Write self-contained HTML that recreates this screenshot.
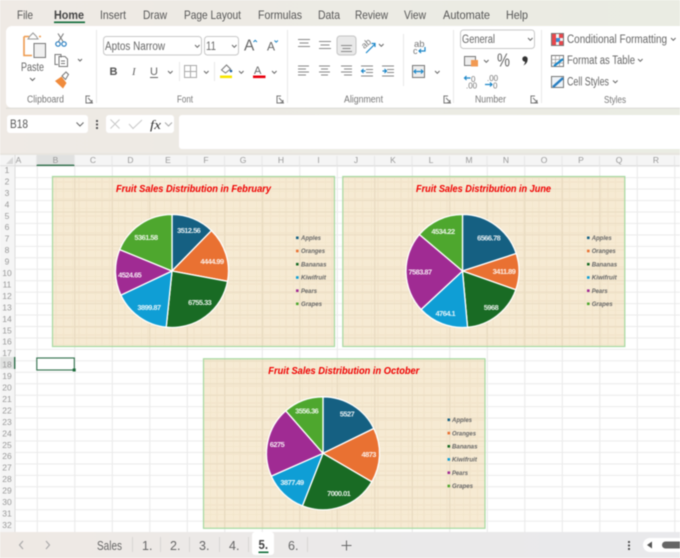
<!DOCTYPE html>
<html lang="en"><head><meta charset="utf-8"><title>Excel</title>
<style>
html,body{margin:0;padding:0;width:680px;height:558px;overflow:hidden;background:#fff}
svg{display:block;filter:blur(.4px)}
text{font-family:"Liberation Sans",sans-serif}
.m{font-size:12px;fill:#555}
.g{font-size:10px;fill:#777}
.r{font-size:11.5px;fill:#666}
.c{font-size:8.5px;fill:#999;text-anchor:middle}
.n{font-size:8.5px;fill:#999;text-anchor:middle}
.t{font-size:10.5px;font-weight:bold;font-style:italic;fill:#f00000}
.d{font-size:7.4px;font-weight:bold;fill:#fff;text-anchor:middle;opacity:.88;letter-spacing:-.5px}
.l{font-size:6.6px;font-weight:bold;font-style:italic;fill:#666}
.s{font-size:12.5px;fill:#666}
.ch{fill:none;stroke:#666;stroke-width:1}
.ln{stroke:#888;stroke-width:1}
.sp{stroke:#e8e8e8;stroke-width:1}
.ic{fill:none;stroke:#777;stroke-width:1}
.bl{fill:none;stroke:#1b86c8;stroke-width:1.2}
</style></head><body>
<svg width="680" height="558" viewBox="0 0 680 558" xmlns="http://www.w3.org/2000/svg">
<defs>
<linearGradient id="top" x1="0" x2="1"><stop offset="0" stop-color="#efeae5"/><stop offset=".55" stop-color="#ecebe4"/><stop offset="1" stop-color="#eaece3"/></linearGradient>
<linearGradient id="bot" x1="0" x2="1"><stop offset="0" stop-color="#efe9e4"/><stop offset=".45" stop-color="#ebe9e9"/><stop offset="1" stop-color="#e9e9ec"/></linearGradient>
<pattern id="vg" x="36.8" y="0" width="37.5" height="10" patternUnits="userSpaceOnUse"><rect width="1" height="10" fill="#e9e9e9"/></pattern>
<pattern id="hg" x="0" y="165.7" width="10" height="11.45" patternUnits="userSpaceOnUse"><rect width="10" height="1" fill="#ebebeb"/></pattern>
<pattern id="vc" x="36.8" y="0" width="37.5" height="10" patternUnits="userSpaceOnUse"><rect width="1" height="10" fill="#e6d8bd"/></pattern>
<pattern id="hc" x="0" y="165.7" width="10" height="11.45" patternUnits="userSpaceOnUse"><rect width="10" height="1" fill="#eadcc2"/></pattern>
<pattern id="tx" width="23" height="17" patternUnits="userSpaceOnUse">
<rect width="23" height="17" fill="#f6ead3"/>
<rect x="3" width="1" height="17" fill="#f0e2c8" opacity=".6"/><rect x="9" width="2" height="17" fill="#f3e5cb" opacity=".7"/><rect x="17" width="1" height="17" fill="#f0e1c6" opacity=".6"/>
<rect y="4" width="23" height="1" fill="#f0e2c8" opacity=".6"/><rect y="11" width="23" height="2" fill="#f3e5cb" opacity=".7"/>
</pattern>
</defs>

<rect width="680" height="155" fill="url(#top)"/>

<!-- menu -->
<text class="m" x="17" y="19" textLength="16" lengthAdjust="spacingAndGlyphs">File</text>
<text class="m" x="54" y="19" textLength="30" lengthAdjust="spacingAndGlyphs" font-weight="bold" style="fill:#444">Home</text>
<rect x="54" y="21.5" width="31" height="1.6" fill="#0f6b38"/>
<text class="m" x="100" y="19" textLength="26" lengthAdjust="spacingAndGlyphs">Insert</text>
<text class="m" x="143" y="19" textLength="24" lengthAdjust="spacingAndGlyphs">Draw</text>
<text class="m" x="184" y="19" textLength="57" lengthAdjust="spacingAndGlyphs">Page Layout</text>
<text class="m" x="258" y="19" textLength="44" lengthAdjust="spacingAndGlyphs">Formulas</text>
<text class="m" x="318" y="19" textLength="22" lengthAdjust="spacingAndGlyphs">Data</text>
<text class="m" x="355" y="19" textLength="33" lengthAdjust="spacingAndGlyphs">Review</text>
<text class="m" x="404" y="19" textLength="22" lengthAdjust="spacingAndGlyphs">View</text>
<text class="m" x="443" y="19" textLength="47" lengthAdjust="spacingAndGlyphs">Automate</text>
<text class="m" x="506" y="19" textLength="22" lengthAdjust="spacingAndGlyphs">Help</text>

<!-- ribbon -->
<rect x="6" y="26" width="690" height="82" rx="6" fill="#fff"/>
<rect x="6" y="107.5" width="680" height="1.5" fill="#dcdad6" opacity=".7"/>
<g class="sp"><line x1="96.5" y1="30" x2="96.5" y2="103"/><line x1="287.5" y1="30" x2="287.5" y2="103"/><line x1="453.5" y1="30" x2="453.5" y2="103"/><line x1="541.5" y1="30" x2="541.5" y2="103"/><line x1="403.5" y1="34" x2="403.5" y2="86"/><line x1="179.5" y1="62" x2="179.5" y2="81"/><line x1="214.5" y1="62" x2="214.5" y2="81"/></g>

<!-- clipboard -->
<path d="M24 36.5h5M39 36.5h2M24 36.5v19h8" fill="none" stroke="#ee9a4d" stroke-width="1.6"/>
<path d="M28 39l2-3 3-3 3 3 2 3z" fill="#fff" stroke="#999"/>
<rect x="34" y="43.5" width="11.5" height="14" fill="#f0f0f0" stroke="#777"/>
<text class="r" x="21" y="71" textLength="23" lengthAdjust="spacingAndGlyphs">Paste</text>
<path class="ch" d="M30 78l2.500 2.500 2.500-2.500"/>
<path d="M58 33.500l5 8M63.500 33.500l-5 8" fill="none" stroke="#777" stroke-width="1"/>
<circle cx="58" cy="44" r="2.200" fill="none" stroke="#2a7fc1" stroke-width="1.200"/><circle cx="64" cy="44" r="2.200" fill="none" stroke="#2a7fc1" stroke-width="1.200"/>
<path class="ic" d="M58 64.500h-3v-10h6l0 3"/><path class="ic" d="M59 56.500h6l2.500 2.500v7.500h-8.500zM61 61h4M61 63.500h4"/>
<path class="ch" d="M78 59l2 2 2-2"/>
<path d="M55 81l6.500-4.500 5 6.500-3.500 5.500z" fill="#f08b3c"/><path d="M62 76l4-4 2.500 2.500-3 5z" fill="none" stroke="#777"/>
<text class="g" x="27" y="102.500" textLength="37" lengthAdjust="spacingAndGlyphs">Clipboard</text>
<path class="ic" d="M93 103h-7v-7h4M88 98l4 4M92 100v2.500h-2.500" stroke-width=".9"/>

<!-- font -->
<rect x="103.500" y="36.500" width="98" height="18.500" rx="3" fill="#fff" stroke="#c8c8c8"/>
<text class="r" x="105" y="50" textLength="60" lengthAdjust="spacingAndGlyphs">Aptos Narrow</text>
<path class="ch" d="M195 45l2.300 2.300 2.300-2.300"/>
<rect x="204.500" y="36.500" width="34" height="18.500" rx="3" fill="#fff" stroke="#c8c8c8"/>
<text class="r" x="206" y="50" textLength="10" lengthAdjust="spacingAndGlyphs">11</text>
<path class="ch" d="M232 45l2.300 2.300 2.300-2.300"/>
<text x="244" y="50.500" font-size="15.500" fill="#666">A</text><path d="M253.500 42l1.700-1.700 1.700 1.700" fill="none" stroke="#1b86c8"/>
<text x="267" y="50.500" font-size="12" fill="#666">A</text><path d="M274.500 40.500l1.700 1.700 1.700-1.700" fill="none" stroke="#1b86c8"/>
<text x="109.500" y="75" font-size="11" font-weight="bold" fill="#555">B</text>
<text x="132" y="75" font-size="11" font-style="italic" fill="#666" style="font-family:'Liberation Serif',serif">I</text>
<text x="150" y="75" font-size="11" fill="#666">U</text><line x1="150" y1="77.500" x2="158" y2="77.500" stroke="#666"/>
<path class="ch" d="M168 71l2.300 2.300 2.300-2.300"/>
<rect x="184.500" y="65.500" width="12" height="12" fill="none" stroke="#aaa"/><path d="M190.500 65.500v12M184.500 71.500h12" stroke="#aaa"/>
<path class="ch" d="M204 71l2.300 2.300 2.300-2.300"/>
<path d="M221.500 70l5-5 4 4-5 4z" fill="none" stroke="#777"/><circle cx="231" cy="71" r="1.300" fill="#1c5f9e"/>
<rect x="220" y="75.500" width="12" height="2.600" fill="#f7e500"/>
<path class="ch" d="M239 71l2.300 2.300 2.300-2.300"/>
<text x="254" y="74" font-size="11" fill="#666">A</text><rect x="253" y="75.500" width="12.500" height="2.600" fill="#e8000d"/>
<path class="ch" d="M272 71l2.300 2.300 2.300-2.300"/>
<text class="g" x="177" y="102.500" textLength="16" lengthAdjust="spacingAndGlyphs">Font</text>
<path class="ic" d="M284 103h-7v-7h4M279 98l4 4M283 100v2.500h-2.500" stroke-width=".9"/>

<!-- alignment -->
<rect x="337" y="36" width="19" height="19" rx="3" fill="#e9e9e9" stroke="#c4c4c4"/>
<g class="ln">
<path d="M298 39.500h12M299.500 43h9M298 46.500h12"/>
<path d="M319 41.500h12M320.500 45h9M319 48.500h12"/>
<path d="M341 45.500h11M342.500 48.500h8M341 51.500h11"/>
<path d="M298 66h11M298 69h8M298 72h11M298 75h8"/>
<path d="M319 66h11M321 69h7M319 72h11M321 75h7"/>
<path d="M341 66h11M344 69h8M341 72h11M344 75h8"/>
<path d="M361 66h12M366 69.500h7M366 72.500h7M361 76h12"/>
<path d="M382 66h12M387 69.500h7M387 72.500h7M382 76h12"/>
</g>
<path class="bl" d="M361.500 71h4M363.500 69l-2 2 2 2M382.500 71h4M384.500 69l2 2-2 2"/>
<text x="362" y="47" font-size="9" fill="#777" transform="rotate(-40 366 45)">ab</text>
<path class="bl" d="M366 53l9-9M371.500 43.500h3.500v3.500"/>
<path class="ch" d="M379 44l2.300 2.300 2.300-2.300"/>
<text x="414" y="47" font-size="9.500" fill="#777">ab</text><text x="413" y="54" font-size="9" fill="#777">c</text>
<path class="bl" d="M425 47v4h-6M421 49l-2 2 2 2"/>
<rect x="412.500" y="65.500" width="12" height="12" fill="#eee" stroke="#777"/><path class="bl" d="M414 71.500h9M416 69.500l-2 2 2 2M421 69.500l2 2-2 2"/>
<path class="ch" d="M435 71l2.300 2.300 2.300-2.300"/>
<text class="g" x="344" y="102.500" textLength="39" lengthAdjust="spacingAndGlyphs">Alignment</text>
<path class="ic" d="M451 103h-7v-7h4M446 98l4 4M450 100v2.500h-2.500" stroke-width=".9"/>

<!-- number -->
<rect x="460.500" y="30" width="74" height="18.500" rx="3" fill="#fff" stroke="#c8c8c8"/>
<text class="r" x="462" y="43" textLength="33" lengthAdjust="spacingAndGlyphs">General</text>
<path class="ch" d="M528 38l2.300 2.300 2.300-2.300"/>
<rect x="464.500" y="56.500" width="11" height="9" fill="#eee" stroke="#777"/><rect x="471" y="60" width="7" height="6.500" fill="#f29a53"/>
<path class="ch" d="M484 60l2.300 2.300 2.300-2.300"/>
<text x="497" y="66.500" font-size="18" fill="#666" textLength="13" lengthAdjust="spacingAndGlyphs">%</text>
<circle cx="525" cy="59" r="2.700" fill="#333"/><path d="M527.600 59.500q0 4-4.300 6q2.200-2.500 1.700-4.500z" fill="#333"/>
<text x="471" y="82" font-size="8" fill="#777">0</text><text x="466" y="88.500" font-size="8" fill="#777">.00</text>
<path class="bl" d="M464.500 78h6M466.500 76l-2 2 2 2"/>
<text x="487" y="81" font-size="8" fill="#777">.00</text><text x="493" y="88.500" font-size="8" fill="#777">0</text>
<path class="bl" d="M485 84.500h7M490 82.500l2 2-2 2"/>
<text class="g" x="475" y="102.500" textLength="31" lengthAdjust="spacingAndGlyphs">Number</text>
<path class="ic" d="M538 103h-7v-7h4M533 98l4 4M537 100v2.500h-2.500" stroke-width=".9"/>

<!-- styles -->
<rect x="551.500" y="33.500" width="12" height="12" fill="#f3f3f3" stroke="#777"/><rect x="552" y="34" width="4" height="11" fill="#e8474c"/><rect x="559" y="34" width="4" height="4" fill="#e8474c"/><rect x="556" y="38" width="4" height="4" fill="#3b8fd6"/><rect x="559" y="41" width="4" height="4" fill="#e8474c"/>
<text class="r" x="567" y="43" textLength="100" lengthAdjust="spacingAndGlyphs">Conditional Formatting</text>
<path class="ch" d="M671 38l2.300 2.300 2.300-2.300"/>
<rect x="551.500" y="55.500" width="12" height="11" fill="#fff" stroke="#777"/><path d="M555.500 55.500v11M559.500 55.500v11M551.500 59.500h12M551.500 63h12" stroke="#999" stroke-width=".7"/><path d="M554 66l9-7" stroke="#1b86c8" stroke-width="2.200"/>
<text class="r" x="567" y="64" textLength="68" lengthAdjust="spacingAndGlyphs">Format as Table</text>
<path class="ch" d="M638 59l2.300 2.300 2.300-2.300"/>
<rect x="551.500" y="76.500" width="12" height="11" fill="#eef3f8" stroke="#777"/><path d="M553 87l10-9" stroke="#2a7fc1" stroke-width="2.500"/>
<text class="r" x="567" y="85.500" textLength="42" lengthAdjust="spacingAndGlyphs">Cell Styles</text>
<path class="ch" d="M613 80.500l2.300 2.300 2.300-2.300"/>
<text class="g" x="604" y="103" textLength="22" lengthAdjust="spacingAndGlyphs">Styles</text>

<!-- formula bar -->
<rect x="7" y="115" width="81" height="18" rx="3" fill="#fff"/>
<text class="r" x="10" y="128" textLength="18" lengthAdjust="spacingAndGlyphs" style="fill:#555">B18</text>
<path class="ch" d="M76.500 122.500l3.500 3.500 3.500-3.500"/>
<g fill="#555"><rect x="96" y="120" width="2" height="2"/><rect x="96" y="123.500" width="2" height="2"/><rect x="96" y="127" width="2" height="2"/></g>
<rect x="106" y="115" width="68" height="18" rx="3" fill="#fff"/>
<path d="M110.500 119.500l9 9M119.500 119.500l-9 9M129 124l4 4.500 9-8.500" fill="none" stroke="#c8c8c8"/>
<text x="150" y="129" font-size="13" font-style="italic" fill="#333" style="font-family:'Liberation Serif',serif" textLength="11" lengthAdjust="spacingAndGlyphs">fx</text>
<path d="M165 122.500l3.500 3.500 3.500-3.500" fill="none" stroke="#aaa"/>
<rect x="179" y="115" width="520" height="34" rx="3" fill="#fff"/>

<!-- sheet -->
<rect x="0" y="153" width="680" height="2" fill="#e8e5df"/>
<rect x="0" y="155" width="680" height="377" fill="#fff"/>
<rect x="15" y="166" width="665" height="366" fill="url(#vg)"/>
<rect x="15" y="166" width="665" height="366" fill="url(#hg)"/>
<rect x="0" y="155" width="680" height="11" fill="#f5f5f5"/>
<rect x="0" y="166" width="15" height="366" fill="#f5f5f5"/>
<rect x="0" y="165.200" width="680" height="1" fill="#dcdcdc"/>
<rect x="14.500" y="155" width="1" height="377" fill="#dcdcdc"/>
<path d="M13 157v7h-7z" fill="#d8d8d8"/>
<rect x="36.500" y="155" width="38" height="11" fill="#e0e1e0"/>
<rect x="36.500" y="164.600" width="38" height="1.400" fill="#2f6f4b"/>
<rect x="0" y="357" width="15" height="12" fill="#e0e1e0"/>
<rect x="14" y="357" width="1.400" height="12" fill="#2f6f4b"/>
<g stroke="#e8e8e8"><path d="M36.500 156v9M74.500 156v9M112 156v9M149.500 156v9M187 156v9M224.500 156v9M262 156v9M299.500 156v9M337 156v9M374.500 156v9M412 156v9M449.500 156v9M487 156v9M524.500 156v9M562 156v9M599.500 156v9M637 156v9M674.500 156v9"/></g>
<g class="c">
<text x="18.500" y="163">A</text><text x="55.500" y="163">B</text><text x="93" y="163">C</text><text x="130.500" y="163">D</text><text x="168" y="163">E</text><text x="206" y="163">F</text><text x="243" y="163">G</text><text x="281" y="163">H</text><text x="318.500" y="163">I</text><text x="356" y="163">J</text><text x="393" y="163">K</text><text x="431" y="163">L</text><text x="469" y="163">M</text><text x="506" y="163">N</text><text x="544" y="163">O</text><text x="581" y="163">P</text><text x="619" y="163">Q</text><text x="656" y="163">R</text>
</g>
<g class="n">
<text x="7" y="173">1</text><text x="7" y="184.500">2</text><text x="7" y="196">3</text><text x="7" y="207.300">4</text><text x="7" y="218.800">5</text><text x="7" y="230.200">6</text><text x="7" y="241.700">7</text><text x="7" y="253.100">8</text><text x="7" y="264.600">9</text><text x="7" y="276">10</text><text x="7" y="287.500">11</text><text x="7" y="298.900">12</text><text x="7" y="310.400">13</text><text x="7" y="321.800">14</text><text x="7" y="333.300">15</text><text x="7" y="344.700">16</text><text x="7" y="356.200">17</text><text x="7" y="367.600">18</text><text x="7" y="379.100">19</text><text x="7" y="390.500">20</text><text x="7" y="402">21</text><text x="7" y="413.400">22</text><text x="7" y="424.900">23</text><text x="7" y="436.300">24</text><text x="7" y="447.800">25</text><text x="7" y="459.200">26</text><text x="7" y="470.700">27</text><text x="7" y="482.100">28</text><text x="7" y="493.600">29</text><text x="7" y="505">30</text><text x="7" y="516.500">31</text><text x="7" y="528">32</text>
</g>

<!-- selected cell -->
<rect x="36.800" y="358" width="37.500" height="12" fill="#fff" stroke="#2f6f4b" stroke-width="1.100"/>
<rect x="72.700" y="368.500" width="3" height="3" fill="#1b6b3a"/>

<!-- chart 1 -->
<rect x="52.500" y="176.500" width="282" height="170" fill="url(#tx)"/>
<rect x="52.500" y="176.500" width="282" height="170" fill="url(#vc)"/>
<rect x="52.500" y="176.500" width="282" height="170" fill="url(#hc)"/>
<rect x="52.500" y="176.500" width="282" height="170" fill="none" stroke="#a6d9a0" stroke-width="1.200"/>
<text class="t" x="116" y="192" textLength="155" lengthAdjust="spacingAndGlyphs">Fruit Sales Distribution in February</text>
<g transform="translate(172 271)" stroke="#fff" stroke-width="1.300" stroke-linejoin="round">
<path fill="#156082" d="M0 0V-56.500A56.500 56.500 0 0 1 39.500 -40.400Z"/>
<path fill="#e97132" d="M0 0L39.500 -40.400A56.500 56.500 0 0 1 55.550 10.300Z"/>
<path fill="#196b24" d="M0 0L55.550 10.300A56.500 56.500 0 0 1 -5.760 56.200Z"/>
<path fill="#0f9ed5" d="M0 0L-5.760 56.200A56.500 56.500 0 0 1 -51.100 24.100Z"/>
<path fill="#a02b93" d="M0 0L-51.100 24.100A56.500 56.500 0 0 1 -52.300 -21.400Z"/>
<path fill="#4ea72e" d="M0 0L-52.300 -21.400A56.500 56.500 0 0 1 0 -56.500Z"/>
</g>
<g class="d"><text x="188.700" y="232.800">3512.56</text><text x="212" y="263.800">4444.99</text><text x="199.700" y="304.800">6755.33</text><text x="149" y="309.800">3899.87</text><text x="129.700" y="277.300">4524.65</text><text x="146" y="239.800">5361.58</text></g>
<g><rect x="296" y="236.500" width="2.600" height="2.600" fill="#156082"/><rect x="296" y="249.700" width="2.600" height="2.600" fill="#e97132"/><rect x="296" y="262.900" width="2.600" height="2.600" fill="#196b24"/><rect x="296" y="276.200" width="2.600" height="2.600" fill="#0f9ed5"/><rect x="296" y="289.400" width="2.600" height="2.600" fill="#a02b93"/><rect x="296" y="302.500" width="2.600" height="2.600" fill="#4ea72e"/></g>
<g class="l"><text x="301" y="240" textLength="20" lengthAdjust="spacingAndGlyphs">Apples</text><text x="301" y="253.200" textLength="24" lengthAdjust="spacingAndGlyphs">Oranges</text><text x="301" y="266.400" textLength="25.500" lengthAdjust="spacingAndGlyphs">Bananas</text><text x="301" y="279.700" textLength="25" lengthAdjust="spacingAndGlyphs">Kiwifruit</text><text x="301" y="292.900" textLength="16" lengthAdjust="spacingAndGlyphs">Pears</text><text x="301" y="306" textLength="21" lengthAdjust="spacingAndGlyphs">Grapes</text></g>

<!-- chart 2 -->
<rect x="342.800" y="176.500" width="282" height="170" fill="url(#tx)"/>
<rect x="342.800" y="176.500" width="282" height="170" fill="url(#vc)"/>
<rect x="342.800" y="176.500" width="282" height="170" fill="url(#hc)"/>
<rect x="342.800" y="176.500" width="282" height="170" fill="none" stroke="#a6d9a0" stroke-width="1.200"/>
<text class="t" x="416" y="192" textLength="135" lengthAdjust="spacingAndGlyphs">Fruit Sales Distribution in June</text>
<g transform="translate(462.500 271)" stroke="#fff" stroke-width="1.300" stroke-linejoin="round">
<path fill="#156082" d="M0 0V-56.500A56.500 56.500 0 0 1 53.700 -17.450Z"/>
<path fill="#e97132" d="M0 0L53.700 -17.450A56.500 56.500 0 0 1 53.300 18.800Z"/>
<path fill="#196b24" d="M0 0L53.300 18.800A56.500 56.500 0 0 1 5.050 56.300Z"/>
<path fill="#0f9ed5" d="M0 0L5.050 56.300A56.500 56.500 0 0 1 -41.400 38.500Z"/>
<path fill="#a02b93" d="M0 0L-41.400 38.500A56.500 56.500 0 0 1 -43.100 -36.500Z"/>
<path fill="#4ea72e" d="M0 0L-43.100 -36.500A56.500 56.500 0 0 1 0 -56.500Z"/>
</g>
<g class="d"><text x="488.700" y="240.500">6566.78</text><text x="504" y="273.800">3411.89</text><text x="491" y="309.800">5968</text><text x="445.300" y="315.800">4764.1</text><text x="420" y="274.500">7583.87</text><text x="443" y="233.800">4534.22</text></g>
<g><rect x="587" y="236.500" width="2.600" height="2.600" fill="#156082"/><rect x="587" y="249.700" width="2.600" height="2.600" fill="#e97132"/><rect x="587" y="262.900" width="2.600" height="2.600" fill="#196b24"/><rect x="587" y="276.200" width="2.600" height="2.600" fill="#0f9ed5"/><rect x="587" y="289.400" width="2.600" height="2.600" fill="#a02b93"/><rect x="587" y="302.500" width="2.600" height="2.600" fill="#4ea72e"/></g>
<g class="l"><text x="591.700" y="240" textLength="20" lengthAdjust="spacingAndGlyphs">Apples</text><text x="591.700" y="253.200" textLength="24" lengthAdjust="spacingAndGlyphs">Oranges</text><text x="591.700" y="266.400" textLength="25.500" lengthAdjust="spacingAndGlyphs">Bananas</text><text x="591.700" y="279.700" textLength="25" lengthAdjust="spacingAndGlyphs">Kiwifruit</text><text x="591.700" y="292.900" textLength="16" lengthAdjust="spacingAndGlyphs">Pears</text><text x="591.700" y="306" textLength="21" lengthAdjust="spacingAndGlyphs">Grapes</text></g>

<!-- chart 3 -->
<rect x="203.500" y="358.800" width="281.500" height="169.500" fill="url(#tx)"/>
<rect x="203.500" y="358.800" width="281.500" height="169.500" fill="url(#vc)"/>
<rect x="203.500" y="358.800" width="281.500" height="169.500" fill="url(#hc)"/>
<rect x="203.500" y="358.800" width="281.500" height="169.500" fill="none" stroke="#a6d9a0" stroke-width="1.200"/>
<text class="t" x="268.300" y="374" textLength="151" lengthAdjust="spacingAndGlyphs">Fruit Sales Distribution in October</text>
<g transform="translate(323 453.300)" stroke="#fff" stroke-width="1.300" stroke-linejoin="round">
<path fill="#156082" d="M0 0V-56.500A56.500 56.500 0 0 1 50.800 -24.800Z"/>
<path fill="#e97132" d="M0 0L50.800 -24.800A56.500 56.500 0 0 1 48.800 28.500Z"/>
<path fill="#196b24" d="M0 0L48.800 28.500A56.500 56.500 0 0 1 -20.600 52.600Z"/>
<path fill="#0f9ed5" d="M0 0L-20.600 52.600A56.500 56.500 0 0 1 -51.700 22.800Z"/>
<path fill="#a02b93" d="M0 0L-51.700 22.800A56.500 56.500 0 0 1 -37.200 -42.500Z"/>
<path fill="#4ea72e" d="M0 0L-37.200 -42.500A56.500 56.500 0 0 1 0 -56.500Z"/>
</g>
<g class="d"><text x="347" y="416.500">5527</text><text x="368.700" y="456.800">4873</text><text x="338.700" y="496">7000.01</text><text x="292" y="484.800">3877.49</text><text x="277" y="446.800">6275</text><text x="306.700" y="413.500">3556.36</text></g>
<g><rect x="447.500" y="418.500" width="2.600" height="2.600" fill="#156082"/><rect x="447.500" y="431.800" width="2.600" height="2.600" fill="#e97132"/><rect x="447.500" y="445" width="2.600" height="2.600" fill="#196b24"/><rect x="447.500" y="458.100" width="2.600" height="2.600" fill="#0f9ed5"/><rect x="447.500" y="471.400" width="2.600" height="2.600" fill="#a02b93"/><rect x="447.500" y="484.700" width="2.600" height="2.600" fill="#4ea72e"/></g>
<g class="l"><text x="452" y="422" textLength="20" lengthAdjust="spacingAndGlyphs">Apples</text><text x="452" y="435.300" textLength="24" lengthAdjust="spacingAndGlyphs">Oranges</text><text x="452" y="448.500" textLength="25.500" lengthAdjust="spacingAndGlyphs">Bananas</text><text x="452" y="461.600" textLength="25" lengthAdjust="spacingAndGlyphs">Kiwifruit</text><text x="452" y="474.900" textLength="16" lengthAdjust="spacingAndGlyphs">Pears</text><text x="452" y="488.200" textLength="21" lengthAdjust="spacingAndGlyphs">Grapes</text></g>

<!-- tab bar -->
<rect x="0" y="532" width="680" height="26" fill="url(#bot)"/>
<path d="M23 541l-3.500 4 3.500 4M46 541l3.500 4-3.500 4" fill="none" stroke="#aaa" stroke-width="1.200"/>
<rect x="252" y="532" width="22" height="23" rx="3" fill="#fff"/>
<g class="sp" style="stroke:#d8d6d4"><path d="M132.500 537v15M160.500 537v15M189.500 537v15M219.500 537v15M248.500 537v15M307.500 537v15"/></g>
<text class="s" x="97" y="550" textLength="25" lengthAdjust="spacingAndGlyphs">Sales</text>
<text class="s" x="142" y="550">1.</text><text class="s" x="170" y="550">2.</text><text class="s" x="199" y="550">3.</text><text class="s" x="229" y="550">4.</text>
<text class="s" x="258.500" y="549" style="fill:#444;font-weight:bold" textLength="9.500" lengthAdjust="spacingAndGlyphs">5.</text>
<rect x="258.500" y="551.500" width="10" height="1.600" fill="#0f6b38"/>
<text class="s" x="288" y="550">6.</text>
<path d="M346.500 540.500v10M341.500 545.500h10" stroke="#666" stroke-width="1"/>
<g fill="#555"><rect x="628" y="541" width="2" height="2"/><rect x="628" y="544.500" width="2" height="2"/><rect x="628" y="548" width="2" height="2"/></g>
<rect x="643" y="538" width="50" height="14" rx="7" fill="#fff"/>
<path d="M647 545l5-3.500v7z" fill="#555"/>
<rect x="662" y="541.500" width="30" height="7" rx="3.500" fill="#666"/>
</svg>
</body></html>
